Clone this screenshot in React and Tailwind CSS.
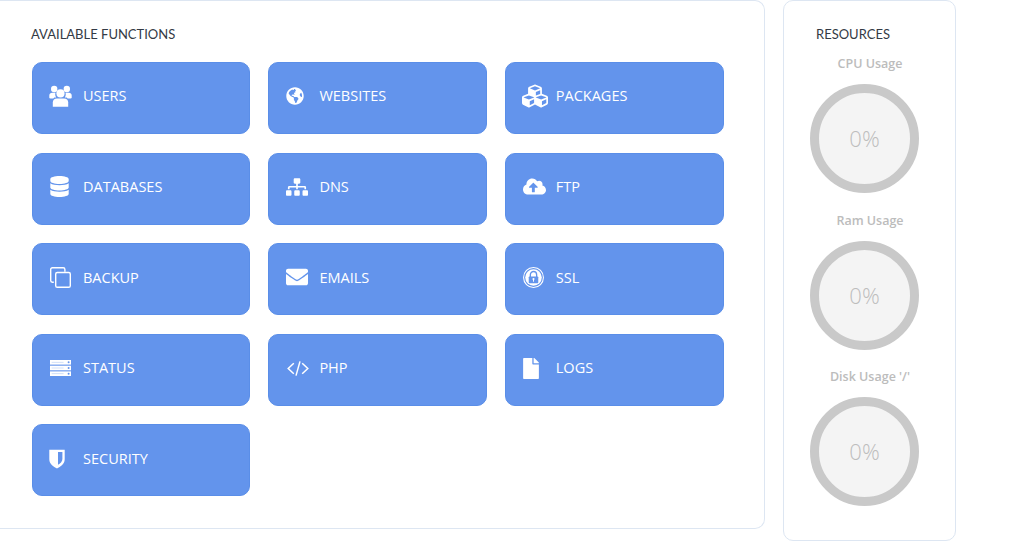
import React from "react";
import { FaGlobeAmericas, FaCubes, FaDatabase, FaSitemap, FaCloudUploadAlt, FaEnvelope, FaFile } from "react-icons/fa";

function Users() {
  return (
    <svg viewBox="0 0 23 22" className="w-[23px] h-[22px]" fill="#fff">
      <circle cx="5.2" cy="4" r="3.2" />
      <circle cx="17.8" cy="4" r="3.2" />
      <path d="M0.3 12.8V10.4C0.3 8.6 1.6 7.8 3.2 7.8H6.6C5.9 9 6.2 11 7.2 12.4H5.2C4.8 13 4.4 13.4 4.2 13.6C2.4 13.6 0.3 13.4 0.3 12.8Z" />
      <path d="M22.7 12.8V10.4C22.7 8.6 21.4 7.8 19.8 7.8H16.4C17.1 9 16.8 11 15.8 12.4H17.8C18.2 13 18.6 13.4 18.8 13.6C20.6 13.6 22.7 13.4 22.7 12.8Z" />
      <circle cx="11.5" cy="8.4" r="4.1" />
      <path d="M3.8 21.8V17.4C3.8 14.9 5.6 13.6 7.8 13.6H15.2C17.4 13.6 19.2 14.9 19.2 17.4V21.8Z" />
    </svg>
  );
}

function Clone() {
  return (
    <svg viewBox="0 0 21 21" className="w-[21px] h-[21px] ml-[1px]" fill="none" stroke="#fff" strokeWidth="1.4">
      <path d="M3.8 15.2H2.4A1.7 1.7 0 0 1 0.7 13.5V2.4A1.7 1.7 0 0 1 2.4 0.7H13.2A1.7 1.7 0 0 1 14.9 2.4V4.8" />
      <rect x="5.7" y="5.5" width="14.6" height="14.8" rx="1.6" />
    </svg>
  );
}

function Status() {
  const bar = (y) => (
    <g key={y}>
      <rect x="0" y={y} width="21" height="4.6" fill="#fff" />
      <circle cx="18.6" cy={y + 2.3} r="1" fill="#6394ec" />
      <rect x="1.6" y={y + 1.9} width="12" height="0.8" fill="#c7d9f7" />
    </g>
  );
  return (
    <svg viewBox="0 0 21 16" className="w-[21px] h-[16px] ml-[1px]">
      {[0, 5.7, 11.4].map(bar)}
    </svg>
  );
}

function Code() {
  return (
    <svg viewBox="0 0 22 15" className="w-[22px] h-[15px] ml-[2px]" fill="none" stroke="#fff" strokeWidth="1.5">
      <path d="M6.8 2.2L1.2 7.5L6.8 12.8" />
      <path d="M15.2 2.2L20.8 7.5L15.2 12.8" />
      <path d="M13 0.4L9 14.6" />
    </svg>
  );
}

function LockBadge() {
  return (
    <svg viewBox="0 0 22 22" className="w-[21px] h-[21px] ml-[1px]" fill="none">
      <circle cx="11" cy="11" r="10.4" stroke="#fff" strokeWidth="1.1" />
      <circle cx="11" cy="11" r="8.7" fill="#fff" />
      <path d="M7.7 10.4V8A3.3 3.3 0 0 1 14.3 8V10.4" stroke="#6394ec" strokeWidth="1.4" />
      <rect x="6" y="10" width="10" height="7" rx="0.8" fill="#6394ec" />
      <circle cx="11" cy="12.7" r="1.1" fill="#fff" />
      <rect x="10.5" y="12.7" width="1" height="2.7" fill="#fff" />
    </svg>
  );
}

function Shield() {
  return (
    <svg viewBox="0 0 16 20" className="w-[16px] h-[20px]">
      <path fillRule="evenodd" fill="#fff" d="M0.3 0.8H15.7V10.2C15.7 14.8 11.5 17.8 8 19.4C4.5 17.8 0.3 14.8 0.3 10.2ZM9 3V15.8C11.2 14.5 13.4 12.6 13.4 10V3Z" />
    </svg>
  );
}

const items = [
  ["USERS", <Users />],
  ["WEBSITES", <FaGlobeAmericas className="w-[18px] h-[18px] ml-[1px]" />],
  ["PACKAGES", <FaCubes className="w-[26px] h-[26px]" />],
  ["DATABASES", <FaDatabase className="w-[19px] h-[21px] ml-[1px]" />],
  ["DNS", <FaSitemap className="w-[22px] h-[20px] ml-[1px]" />],
  ["FTP", <FaCloudUploadAlt className="w-[23px] h-[23px] ml-[1px]" />],
  ["BACKUP", <Clone />],
  ["EMAILS", <FaEnvelope className="w-[22px] h-[22px] ml-[1px]" />],
  ["SSL", <LockBadge />],
  ["STATUS", <Status />],
  ["PHP", <Code />],
  ["LOGS", <FaFile className="w-[18px] h-[21px]" />],
  ["SECURITY", <Shield />],
];

function Func({ label, icon }) {
  return (
    <div className="h-[72px] rounded-[10px] border border-[#5a8ee8] bg-[#6394ec] flex items-center pl-[16px] pb-[3.4px] text-white text-[14.5px]">
      <span className="w-[34px] shrink-0 flex items-center">{icon}</span>
      <span>{label}</span>
    </div>
  );
}

function Gauge({ label }) {
  return (
    <div className="flex flex-col items-start">
      <div className="w-full text-center text-[12.5px] font-semibold text-[#bcbcbc] leading-[18px]">{label}</div>
      <div className="mt-[11px] w-[109px] h-[109px] rounded-full border-[9px] border-[#c9c9c9] bg-[#f4f4f4] flex items-center justify-center text-[22px] font-light text-[#bdbdbd]">
        0%
      </div>
    </div>
  );
}

export default function App() {
  return (
    <div className="w-[1024px] h-[559px] overflow-hidden bg-white flex items-start font-['Open_Sans',sans-serif]">
      <div className="w-[765px] h-[529px] shrink-0 bg-white border border-l-0 border-[#dde6f2] rounded-r-[10px] pl-[32px] pt-[25px]">
        <h2 className="-ml-[1px] text-[13px] leading-[16px] text-[#333a45] font-['Lato',sans-serif]">AVAILABLE FUNCTIONS</h2>
        <div className="mt-[20px] grid grid-cols-[218.4px_218.4px_219px] gap-x-[18px] gap-y-[18.6px]">
          {items.map(([label, icon]) => (
            <Func key={label} label={label} icon={icon} />
          ))}
        </div>
      </div>
      <div className="ml-[18px] w-[173px] h-[541px] shrink-0 bg-white border border-[#dde6f2] rounded-[10px] pl-[26px] pt-[25px]">
        <h2 className="pl-[6px] text-[13px] leading-[16px] text-[#333a45] font-['Lato',sans-serif]">RESOURCES</h2>
        <div className="mt-[13px] flex flex-col gap-[18.6px] w-[120px]">
          <Gauge label="CPU Usage" />
          <Gauge label="Ram Usage" />
          <Gauge label="Disk Usage '/'" />
        </div>
      </div>
    </div>
  );
}
